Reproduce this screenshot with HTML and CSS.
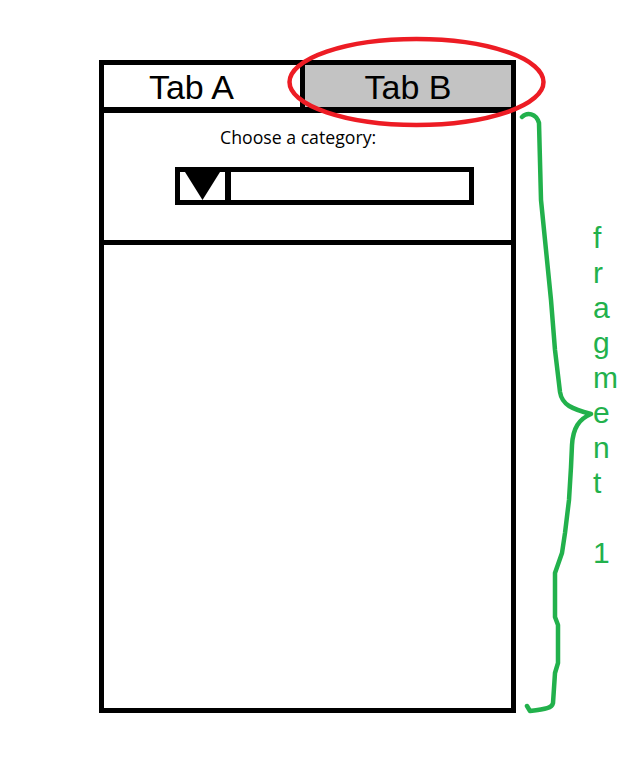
FILE: index.html
```html
<!DOCTYPE html>
<html lang="en">
<head>
    <meta charset="UTF-8">
    <meta name="viewport" content="width=device-width, initial-scale=1.0">
    <title>Tabs with fragment</title>
    <link rel="stylesheet" href="styles.css">
</head>
<body>
    <div class="mockup">
        <div class="tabs">
            <div class="tab tab-first">Tab A</div>
            <div class="tab tab-active">Tab B</div>
        </div>

        <div class="panel-header">
            <div class="label">Choose a category:</div>
            <div class="dropdown">
                <div class="dropdown-arrow">
                    <svg width="35" height="28" viewBox="0 0 35 28">
                        <polygon points="0,0 35,0 17.5,28" fill="#000"/>
                    </svg>
                </div>
                <div class="dropdown-value"></div>
            </div>
        </div>

        <div class="panel-body"></div>
    </div>

    <!-- notes drawn on top of the wireframe -->
    <svg class="markup" width="639" height="775" viewBox="0 0 639 775">
        <ellipse cx="416.5" cy="82" rx="127" ry="43" fill="none" stroke="#ed1c24" stroke-width="4.5"/>
        <path d="M522,117 C527,112 536,113 539,123 L541,200 L546,250 L551,300 L555,350 L560,392
                 C562,405 572,409 591,414
                 C579,419 573,428 572,445 L571,467 L569,500 L565,533 L562,553 L555,573
                 L555,617 L558,625 L558,663 L555,673 L553,703 C552,708 546,709 530,711 L527,706"
              fill="none" stroke="#22b14c" stroke-width="4.5" stroke-linecap="round" stroke-linejoin="round"/>
    </svg>

    <div class="note">
        <span>f</span>
        <span>r</span>
        <span>a</span>
        <span>g</span>
        <span>m</span>
        <span>e</span>
        <span>n</span>
        <span>t</span>
        <span>&nbsp;</span>
        <span>1</span>
    </div>
</body>
</html>
```

FILE: styles.css
```css
* {
    margin: 0;
    padding: 0;
    box-sizing: border-box;
}

html,
body {
    background: #fff;
}

body {
    position: relative;
    width: 639px;
    height: 775px;
    overflow: hidden;
    font-family: 'Liberation Sans', Arial, sans-serif;
    color: #000;
}

.mockup {
    width: 417px;
    height: 653px;
    margin: 60px 0 0 99px;
    border: 5px solid #000;
    display: flex;
    flex-direction: column;
}

/* tab strip */
.tabs {
    display: flex;
    height: 48px;
    border-bottom: 6px solid #000;
}

.tab {
    height: 42px;
    padding-top: 3px;
    line-height: 39px;
    font-size: 34px;
    text-align: center;
}

.tab-first {
    width: 201px;
    padding-right: 21px;
    border-right: 5px solid #000;
}

.tab-active {
    flex: 1;
    background: #c3c3c3;
}

/* category picker */
.panel-header {
    height: 132px;
    padding-top: 12px;
    border-bottom: 5px solid #000;
}

.label {
    padding-left: 116px;
    font-family: 'Open Sans', sans-serif;
    font-size: 17.7px;
    line-height: 24px;
}

.dropdown {
    display: flex;
    width: 299px;
    height: 38px;
    margin: 18px 0 0 71px;
    border: 5px solid #000;
}

.dropdown-arrow {
    width: 51px;
    border-right: 6px solid #000;
    display: flex;
    align-items: center;
    justify-content: center;
}

.dropdown-arrow svg {
    display: block;
}

.dropdown-value {
    flex: 1;
}

.panel-body {
    flex: 1;
}

/* annotation layer */
.markup {
    position: absolute;
    top: 0;
    left: 0;
    pointer-events: none;
}

.note {
    position: absolute;
    top: 220px;
    left: 593px;
    display: flex;
    flex-direction: column;
    font-size: 30px;
    line-height: 35px;
    color: #22b14c;
}
```
